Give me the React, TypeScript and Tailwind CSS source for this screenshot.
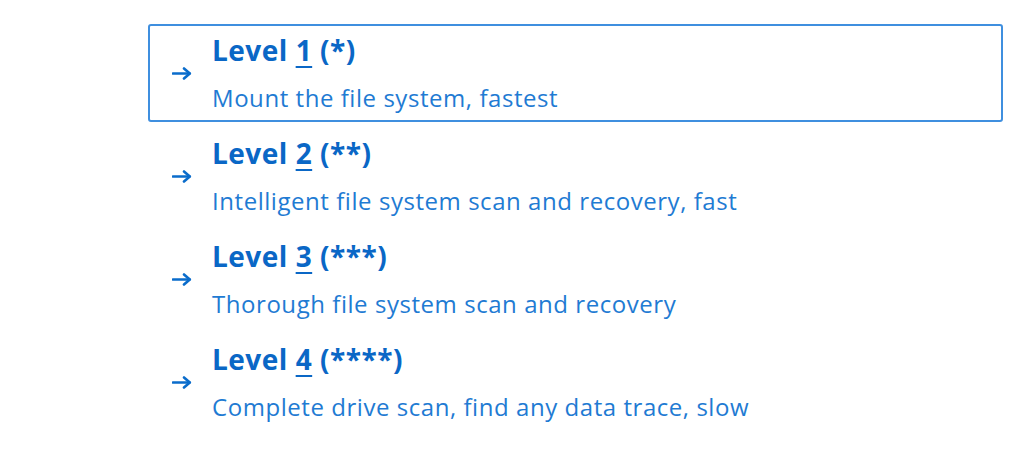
type Level = {
  num: string;
  stars: string;
  desc: string;
};

const levels: Level[] = [
  { num: '1', stars: '(*)', desc: 'Mount the file system, fastest' },
  { num: '2', stars: '(**)', desc: 'Intelligent file system scan and recovery, fast' },
  { num: '3', stars: '(***)', desc: 'Thorough file system scan and recovery' },
  { num: '4', stars: '(****)', desc: 'Complete drive scan, find any data trace, slow' },
];

function Arrow() {
  return (
    <svg width="20" height="13" viewBox="0 0 20 13" fill="none" className="text-[#0a6ccb]">
      <path d="M1 6.5H17.5" stroke="currentColor" strokeWidth="2.6" strokeLinecap="round" />
      <path d="M12 1.5L17.8 6.5L12 11.5" stroke="currentColor" strokeWidth="2.6" strokeLinecap="round" strokeLinejoin="round" />
    </svg>
  );
}

function LevelRow({ level, selected }: { level: Level; selected: boolean }) {
  return (
    <div
      className={`flex items-center h-[98px] rounded-[3px] border-2 ${
        selected ? 'border-[#3f8fdf]' : 'border-transparent'
      }`}
    >
      {/* arrow glyph */}
      <div className="w-[62px] pl-[22px] flex items-center">
        <Arrow />
      </div>
      <div className="flex flex-col">
        <div className="text-[28px] leading-[34px] font-bold text-[#0a67c6] tracking-[0.5px]">
          Level <span className="underline underline-offset-[5px] decoration-2">{level.num}</span> {level.stars}
        </div>
        <div className="text-[24px] leading-[32px] mt-[15px] text-[#1f7bd3] tracking-[0.55px]">
          {level.desc}
        </div>
      </div>
    </div>
  );
}

export default function App() {
  return (
    <div
      className="w-[1024px] h-[457px] bg-white pt-[24px] pl-[148px]"
      style={{ fontFamily: '"Open Sans", "Noto Sans", sans-serif' }}
    >
      <div className="w-[855px] flex flex-col gap-[5px]">
        {levels.map((lv, i) => (
          <LevelRow key={lv.num} level={lv} selected={i === 0} />
        ))}
      </div>
    </div>
  );
}
